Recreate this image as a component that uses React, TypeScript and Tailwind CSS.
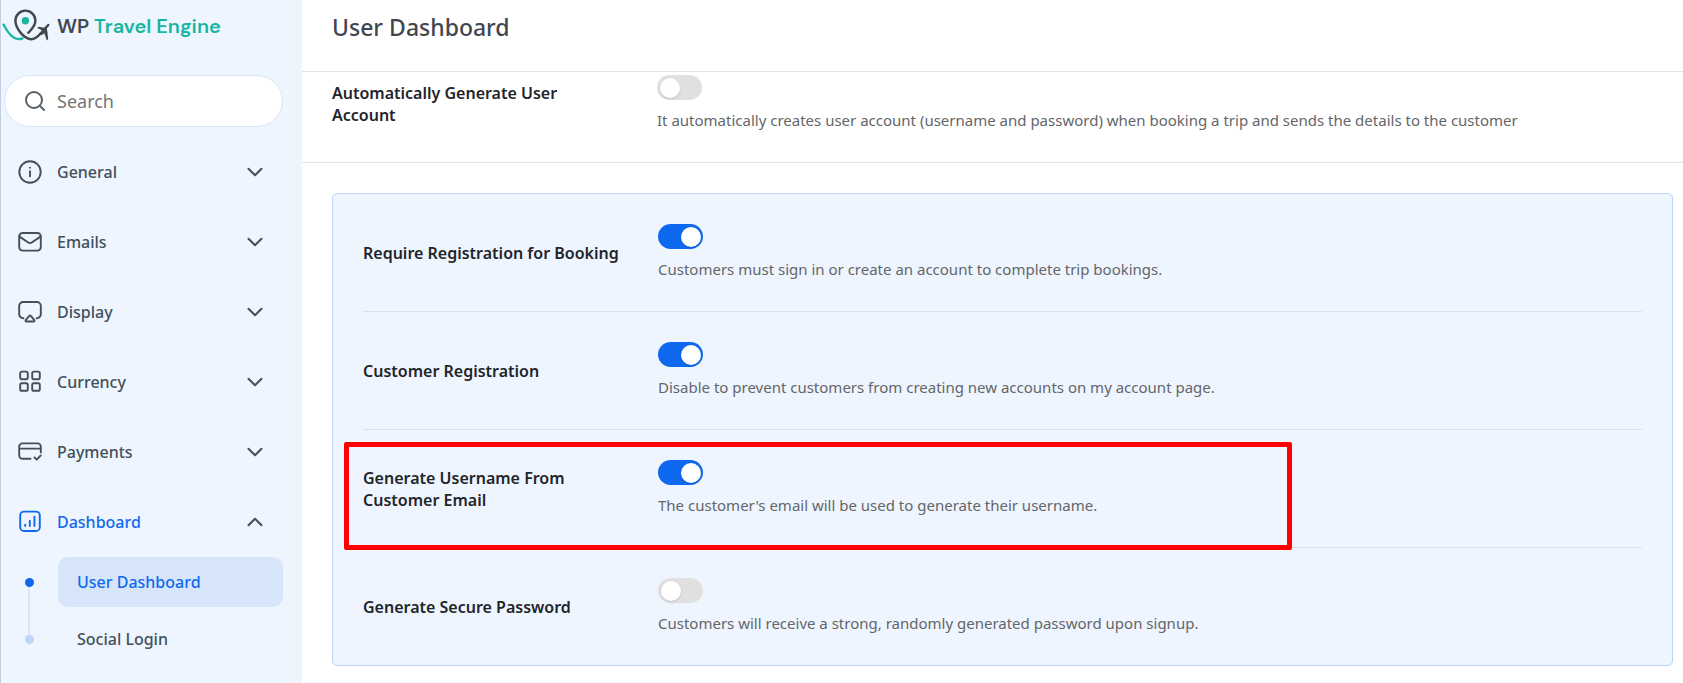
import { useState } from "react";
import type { ReactNode } from "react";
import { ChevronDown, ChevronUp, Search } from "lucide-react";

const Icon = ({ children }: { children: ReactNode }) => (
  <svg
    viewBox="0 0 24 24"
    fill="none"
    stroke="currentColor"
    strokeWidth="1.9"
    strokeLinecap="round"
    strokeLinejoin="round"
    className="size-6 shrink-0"
    aria-hidden="true"
  >
    {children}
  </svg>
);

const NAV_ITEMS = [
  {
    title: "General",
    icon: (
      <Icon>
        <circle cx="12" cy="12" r="10.7" />
        <path d="M12 11.2v5.2M12 7.6v.2" />
      </Icon>
    ),
  },
  {
    title: "Emails",
    icon: (
      <Icon>
        <rect x="1.2" y="3" width="21.6" height="17.6" rx="3.4" />
        <path d="M1.6 6.6l8.6 5.9a3.2 3.2 0 0 0 3.6 0l8.6-5.9" />
      </Icon>
    ),
  },
  {
    title: "Display",
    icon: (
      <Icon>
        <path d="M5.4 18.2a4 4 0 0 1-4.2-4.2V6a4 4 0 0 1 4-4h13.6a4 4 0 0 1 4 4v8a4 4 0 0 1-4.2 4.2" />
        <path d="M11.2 15.8a1 1 0 0 1 1.6 0l3.5 4.4a.8.8 0 0 1-.6 1.3H8.3a.8.8 0 0 1-.6-1.3z" />
      </Icon>
    ),
  },
  {
    title: "Currency",
    icon: (
      <Icon>
        <rect x="2.2" y="1.6" width="7.6" height="7.6" rx="1.6" />
        <rect x="14.2" y="1.6" width="7.6" height="7.6" rx="1.6" />
        <rect x="2.2" y="13.2" width="7.6" height="7.6" rx="1.6" />
        <rect x="14.2" y="13.2" width="7.6" height="7.6" rx="1.6" />
      </Icon>
    ),
  },
  {
    title: "Payments",
    icon: (
      <Icon>
        <path d="M12.5 18.8H4.4a3.2 3.2 0 0 1-3.2-3.2V6.6a3.2 3.2 0 0 1 3.2-3.2h15.2a3.2 3.2 0 0 1 3.2 3.2v5.8M1.4 8.6h21.2" />
        <path d="M16.4 17.4l2.3 2.3 4-4.2" />
      </Icon>
    ),
  },
  {
    title: "Dashboard",
    icon: (
      <Icon>
        <rect x="2.2" y="1.6" width="19.6" height="19.4" rx="3.8" />
        <path d="M7.2 14.6v1.4M11.8 10.6V16M16.4 6.6V16" />
      </Icon>
    ),
  },
];

const SUB_ITEMS = ["User Dashboard", "Social Login"];

const BOOKING_SETTINGS = [
  {
    id: "require-registration",
    label: "Require Registration for Booking",
    description:
      "Customers must sign in or create an account to complete trip bookings.",
    enabled: true,
  },
  {
    id: "customer-registration",
    label: "Customer Registration",
    description:
      "Disable to prevent customers from creating new accounts on my account page.",
    enabled: true,
  },
  {
    id: "generate-username",
    label: "Generate Username From Customer Email",
    description:
      "The customer's email will be used to generate their username.",
    enabled: true,
    highlighted: true,
  },
  {
    id: "generate-password",
    label: "Generate Secure Password",
    description:
      "Customers will receive a strong, randomly generated password upon signup.",
    enabled: false,
  },
];

const Logo = () => (
  <a href="#" className="flex h-[51px] items-center gap-[7px] pl-px">
    <svg
      viewBox="0 0 48 33"
      fill="none"
      strokeLinecap="round"
      strokeLinejoin="round"
      className="h-[33px] w-12 shrink-0"
      aria-hidden="true"
    >
      <path
        d="M1.5 15.6C5.5 23.5 10.500 29.800 16.200 30.200c1.700 0 3.200-.3 4.300-.8"
        stroke="#17b6a0"
        strokeWidth="2.3"
      />
      <path
        d="M26.3 23.800c4-3.800 7.100-8 7.100-12.200A10 10 0 0 0 13.400 11.600c0 7.400 8 17.800 15.300 18.600 4.300.2 7.300-2.600 10.300-6.200L46.300 16"
        stroke="#41494f"
        strokeWidth="2.4"
      />
      <circle cx="23.4" cy="11.8" r="3.7" fill="#17b6a0" />
      <path
        d="M44.500 17.200l-2.300 1.500-5.700-.9-1.200 1.200 5 2.500-3 3.500 2.200 1.200 2.800-2 2.600 7.200 1.300-1.200-.8-7.200z"
        fill="#41494f"
      />
    </svg>
    <span className="font-['DM_Sans','Inter',sans-serif] text-xl font-semibold text-[#41494f]">
      WP <span className="text-[#17b6a0]">Travel Engine</span>
    </span>
  </a>
);

const Sidebar = () => (
  <aside className="w-[302px] shrink-0 border-l border-[#c5cde0] bg-[#eef5ff]">
    <Logo />

    <label className="mt-6 mr-[19px] ml-[3px] flex h-[52px] items-center gap-2.5 rounded-full border border-[#d7e5fb] bg-white pl-[18px]">
      <Search className="size-6 shrink-0 text-[#566267]" strokeWidth={2} />
      <input
        type="search"
        aria-label="Search"
        placeholder="Search"
        className="w-full min-w-0 bg-transparent text-lg outline-none placeholder:text-[#757575]"
      />
    </label>

    <nav className="mt-2.5">
      {NAV_ITEMS.map(({ title, icon }) => {
        const active = title === "Dashboard";
        const Chevron = active ? ChevronUp : ChevronDown;

        return (
          <button
            key={title}
            type="button"
            aria-expanded={active}
            className="flex h-[70px] w-full items-center pr-[34px] pl-[17px] text-[#42505a]"
          >
            <span
              className={
                active
                  ? "flex flex-1 items-center gap-[15px] text-[#0f69ef]"
                  : "flex flex-1 items-center gap-[15px]"
              }
            >
              {icon}
              <span className="text-base font-medium">{title}</span>
            </span>
            <Chevron className="size-[26px]" strokeWidth={1.9} />
          </button>
        );
      })}

      <ul className="mr-[19px] ml-6 space-y-[7px]">
        {SUB_ITEMS.map((item, index) => (
          <li key={item} className="relative flex items-center gap-6">
            {index > 0 && (
              <span className="absolute bottom-1/2 left-[3px] h-[57px] w-0.5 bg-[#d7e5fb]"></span>
            )}
            <span
              className={
                index === 0
                  ? "relative z-10 size-[9px] rounded-full bg-[#0f69ef]"
                  : "relative z-10 size-[9px] rounded-full bg-[#bcd5fb]"
              }
            ></span>
            <a
              href="#"
              className={
                index === 0
                  ? "flex h-[50px] flex-1 items-center rounded-[10px] bg-[#d7e5fb] pl-[19px] text-base font-medium text-[#0f69ef]"
                  : "flex h-[50px] flex-1 items-center rounded-[10px] pl-[19px] text-base font-medium text-[#42505a]"
              }
            >
              {item}
            </a>
          </li>
        ))}
      </ul>
    </nav>
  </aside>
);

type SettingRowProps = {
  id: string;
  label: string;
  description: string;
  enabled: boolean;
  highlighted?: boolean;
  className?: string;
};

const SettingRow = ({
  id,
  label,
  description,
  enabled,
  highlighted,
  className = "gap-[30px]",
}: SettingRowProps) => {
  const [checked, setChecked] = useState(enabled);

  return (
    <div className={`relative flex items-center ${className}`}>
      <label
        htmlFor={id}
        className="w-[265px] shrink-0 text-base leading-[22px] font-semibold text-[#1f2529]"
      >
        {label}
      </label>
      <div className="py-[30px]">
        <input
          id={id}
          type="checkbox"
          role="switch"
          checked={checked}
          onChange={(e) => setChecked(e.target.checked)}
          aria-describedby={`${id}-description`}
          className="block h-[25px] w-[45px] appearance-none rounded-full bg-[#e0e0e0] p-[3px] before:block before:size-5 before:rounded-full before:bg-white before:shadow-sm checked:bg-[#0f69ef] checked:before:ml-5"
        />
        <p
          id={`${id}-description`}
          className="mt-2 text-[15px] leading-6 text-[#646669]"
        >
          {description}
        </p>
      </div>
      {highlighted && (
        <span className="pointer-events-none absolute top-3 -bottom-[3px] -left-[19px] w-[948px] rounded-[2px] border-5 border-[#ff0000]"></span>
      )}
    </div>
  );
};

export default function App() {
  return (
    <div className="flex min-h-screen bg-white font-['Noto_Sans','Open_Sans',sans-serif]">
      <Sidebar />

      <main className="min-w-0 flex-1">
        <header className="relative z-10 flex h-[72px] border-b border-[#e4e4e4] bg-white px-[30px] pt-[11px]">
          <h1 className="text-[23px] leading-8 font-medium text-[#42474f]">
            User Dashboard
          </h1>
        </header>

        {/* first row sits partly scrolled under the header */}
        <SettingRow
          id="generate-account"
          label="Automatically Generate User Account"
          description="It automatically creates user account (username and password) when booking a trip and sends the details to the customer"
          enabled={false}
          className="-mt-[27px] gap-[60px] border-b border-[#e4e4e4] pl-[30px]"
        />

        <section className="mt-[30px] mr-2.5 ml-[30px] divide-y divide-[#d9dfeb] rounded-[5px] border border-[#bcd5f8] bg-[#eef5ff] px-[30px]">
          {BOOKING_SETTINGS.map((setting) => (
            <SettingRow key={setting.id} {...setting} />
          ))}
        </section>
      </main>
    </div>
  );
}
